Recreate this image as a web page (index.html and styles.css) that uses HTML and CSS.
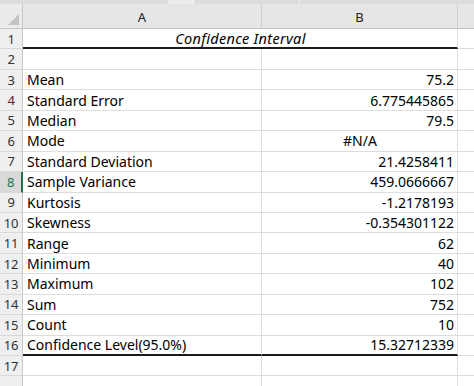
FILE: index.html
```html
<!DOCTYPE html>
<html>
<head>
<meta charset="utf-8">
<link rel="stylesheet" href="styles.css">
</head>
<body>
<div class="topstrip">
  <div class="seg s1"></div><div class="seg s2"></div><div class="seg s3"></div><div class="seg s4"></div>
</div>
<div class="grid">
  <div class="corner"><span class="tri"></span></div>
  <div class="ch">A</div>
  <div class="ch">B</div>
  <div class="ch chc"></div>

  <div class="rh">1</div><div class="cell title bb">Confidence Interval</div><div class="cell cc"></div>
  <div class="rh">2</div><div class="cell"></div><div class="cell"></div><div class="cell cc"></div>
  <div class="rh">3</div><div class="cell">Mean</div><div class="cell num">75.2</div><div class="cell cc"></div>
  <div class="rh">4</div><div class="cell">Standard Error</div><div class="cell num">6.775445865</div><div class="cell cc"></div>
  <div class="rh">5</div><div class="cell">Median</div><div class="cell num">79.5</div><div class="cell cc"></div>
  <div class="rh">6</div><div class="cell">Mode</div><div class="cell ctr">#N/A</div><div class="cell cc"></div>
  <div class="rh">7</div><div class="cell">Standard Deviation</div><div class="cell num">21.4258411</div><div class="cell cc"></div>
  <div class="rh sel">8</div><div class="cell">Sample Variance</div><div class="cell num">459.0666667</div><div class="cell cc"></div>
  <div class="rh">9</div><div class="cell">Kurtosis</div><div class="cell num">-1.2178193</div><div class="cell cc"></div>
  <div class="rh">10</div><div class="cell">Skewness</div><div class="cell num">-0.354301122</div><div class="cell cc"></div>
  <div class="rh">11</div><div class="cell">Range</div><div class="cell num">62</div><div class="cell cc"></div>
  <div class="rh">12</div><div class="cell">Minimum</div><div class="cell num">40</div><div class="cell cc"></div>
  <div class="rh">13</div><div class="cell">Maximum</div><div class="cell num">102</div><div class="cell cc"></div>
  <div class="rh">14</div><div class="cell">Sum</div><div class="cell num">752</div><div class="cell cc"></div>
  <div class="rh">15</div><div class="cell">Count</div><div class="cell num">10</div><div class="cell cc"></div>
  <div class="rh">16</div><div class="cell bb">Confidence Level(95.0%)</div><div class="cell num bb">15.32712339</div><div class="cell cc"></div>
  <div class="rh">17</div><div class="cell"></div><div class="cell"></div><div class="cell cc"></div>
  <div class="rh"></div><div class="cell"></div><div class="cell"></div><div class="cell cc"></div>
</div>
</body>
</html>
```
FILE: styles.css
```css
html, body {
  margin: 0;
  padding: 0;
  background: #ffffff;
  overflow: hidden;
}
body {
  width: 474px;
  height: 386px;
  font-family: "Noto Sans", "Liberation Sans", sans-serif;
  color: #000;
}
.topstrip {
  height: 4px;
  background: #dcdcdc;
  display: flex;
}
.seg { height: 4px; }
.s1 { width: 168px; }
.s2 { width: 25px; background: #ececec; }
.s3 { width: 105px; border-left: 1px solid #f4f4f4; }
.s4 { flex: 1; border-left: 1px solid #f4f4f4; }
.grid {
  display: grid;
  grid-template-columns: 23px 239px 196px 16px;
  grid-template-rows: 25px;
  grid-auto-rows: 20.44px;
}
.corner {
  background: #ebebeb;
  border-right: 1px solid #c8c8c8;
  border-bottom: 1px solid #c8c8c8;
  box-sizing: border-box;
  display: flex;
  justify-content: flex-end;
  align-items: flex-end;
  padding: 0 3px 3px 0;
}
.tri {
  width: 0;
  height: 0;
  border-left: 11px solid transparent;
  border-bottom: 11px solid #c3c3c3;
}
.ch {
  background: #e6e6e6;
  border-right: 1px solid #cfcfcf;
  border-bottom: 1px solid #c4c4c4;
  box-sizing: border-box;
  display: flex;
  align-items: center;
  justify-content: center;
  font-size: 13px;
  color: #222;
  padding-top: 2px;
}
.chc { border-right: none; }
.rh {
  background: #efefef;
  border-right: 1px solid #c8c8c8;
  border-bottom: 1px solid #d8d8d8;
  box-sizing: border-box;
  display: flex;
  align-items: center;
  justify-content: center;
  font-size: 13px;
  color: #333;
  letter-spacing: -0.3px;
}
.rh.sel {
  background: #d9d9d9;
  color: #217346;
  border-right: 2px solid #217346;
}
.cell {
  border-right: 1px solid #dedede;
  border-bottom: 1px solid #dedede;
  box-sizing: border-box;
  display: flex;
  align-items: center;
  font-size: 14px;
  padding: 0 3px 0 4px;
  white-space: nowrap;
  overflow: hidden;
}
.cell.cc { border-right: none; }
.num { justify-content: flex-end; }
.ctr { justify-content: center; }
.title {
  grid-column: span 2;
  justify-content: center;
  font-style: italic;
  font-size: 14.5px;
  letter-spacing: 0.3px;
}
.bb { border-bottom: 2px solid #1a1a1a; }
```
